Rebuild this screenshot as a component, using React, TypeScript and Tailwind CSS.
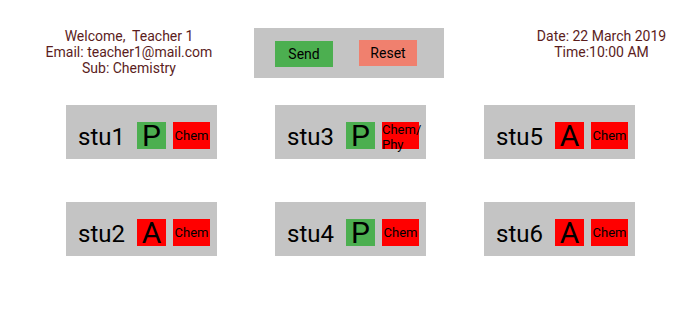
import React from "react"

type Student = { name: string; present: boolean; sub: string[] }

const rows: Student[] = [
  { name: "stu1", present: true, sub: ["Chem"] },
  { name: "stu3", present: true, sub: ["Chem/", "Phy"] },
  { name: "stu5", present: false, sub: ["Chem"] },
  { name: "stu2", present: false, sub: ["Chem"] },
  { name: "stu4", present: true, sub: ["Chem"] },
  { name: "stu6", present: false, sub: ["Chem"] },
]

function StudentCard({ s }: { s: Student }) {
  return (
    <div className="flex h-[54px] items-start bg-[#c4c4c4] pl-[12px] pt-[17px]">
      <span className="mt-[2px] h-[27px] w-[59px] text-[24px] leading-[27px] text-black">{s.name}</span>
      <div
        className={`flex h-[27px] w-[29px] items-center justify-center text-[30px] leading-none text-black ${
          s.present ? "bg-[#4caf50]" : "bg-[#ff0000]"
        }`}
      >
        {s.present ? "P" : "A"}
      </div>
      {s.sub.length > 1 ? (
        <div className="ml-[7px] h-[27px] w-[37px] whitespace-nowrap bg-[#ff0000] text-[13px] leading-[15px] text-black">
          {s.sub[0]}
          <br />
          {s.sub[1]}
        </div>
      ) : (
        <div className="ml-[7px] flex h-[27px] w-[37px] items-center justify-center bg-[#ff0000] text-[13px] leading-none text-black">
          {s.sub[0]}
        </div>
      )}
    </div>
  )
}

export default function App() {
  return (
    <div className="h-[320px] w-[700px] bg-white font-['Roboto',sans-serif]">
      <header className="flex items-start pt-[28px]">
        <div className="ml-[20px] w-[218px] text-center text-[14px] leading-[16px] text-[#5b1d1d]">
          <div>Welcome,&nbsp; Teacher 1</div>
          <div>Email: teacher1@mail.com</div>
          <div>Sub: Chemistry</div>
        </div>
        <div className="ml-[16px] flex h-[50px] w-[190px] items-start bg-[#c4c4c4] pl-[21px]">
          <button className="mt-[13px] h-[26px] w-[58px] bg-[#4caf50] text-[14px] text-black">Send</button>
          <button className="ml-[26px] mt-[12px] h-[26px] w-[58px] bg-[#f0806e] text-[14px] text-black">Reset</button>
        </div>
        <div className="ml-[87px] w-[141px] text-center text-[14px] leading-[16px] text-[#5b1d1d]">
          <div>Date: 22 March 2019</div>
          <div>Time:10:00 AM</div>
        </div>
      </header>

      <section className="mt-[27px] grid grid-cols-[151px_151px_151px] gap-x-[58px] gap-y-[43px] pl-[66px]">
        {rows.map((s) => (
          <StudentCard key={s.name} s={s} />
        ))}
      </section>
    </div>
  )
}
